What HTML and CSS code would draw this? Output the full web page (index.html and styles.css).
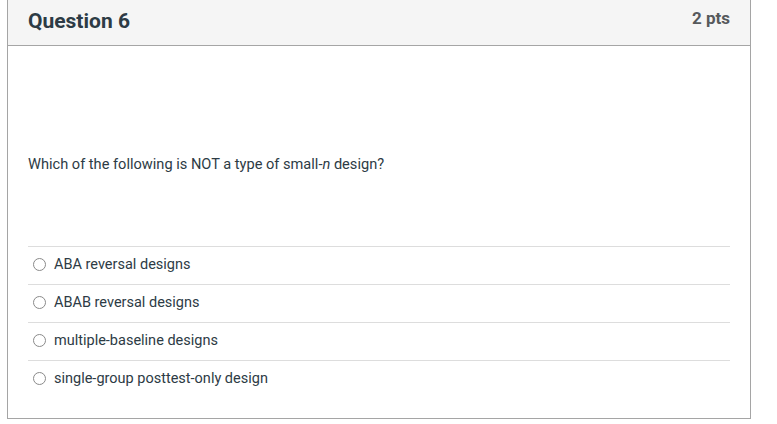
FILE: index.html
```html
<!DOCTYPE html>
<html lang="en">
<head>
    <meta charset="UTF-8">
    <title>Question 6</title>
    <link rel="stylesheet" href="styles.css">
</head>
<body>
<div class="question">
    <div class="question-header">
        <h2 class="question-title">Question 6</h2>
        <span class="question-points">2 pts</span>
    </div>

    <div class="question-body">
        <p class="question-text">Which of the following is NOT a type of small-<em>n</em> design?</p>

        <div class="answers">
            <label class="answer"><span class="radio"></span>ABA reversal designs</label>
            <label class="answer"><span class="radio"></span>ABAB reversal designs</label>
            <label class="answer"><span class="radio"></span>multiple-baseline designs</label>
            <label class="answer"><span class="radio"></span>single-group posttest-only design</label>
        </div>
    </div>
</div>
</body>
</html>
```

FILE: styles.css
```css
body {
    margin: 0;
    padding: 0;
    background-color: #ffffff;
    font-family: Roboto, "Liberation Sans", Arial, sans-serif;
    color: #2d3b45;
}

.question {
    margin: -1px 0 0 7px;
    width: 744px;
    height: 420px;
    box-sizing: border-box;
    border: 1px solid #a5a5a5;
}

/* ヘッダー */
.question-header {
    display: flex;
    justify-content: space-between;
    align-items: flex-start;
    height: 46px;
    box-sizing: border-box;
    padding: 0 20px 0 20px;
    background-color: #f5f5f5;
    border-bottom: 1px solid #a5a5a5;
}

.question-title {
    margin: 8px 0 0 0;
    font-size: 21px;
    line-height: 26px;
    font-weight: bold;
    color: #2d3b45;
}

.question-points {
    margin: 7px 0 0 0;
    font-size: 17px;
    line-height: 22px;
    font-weight: bold;
    color: #56595c;
}

.question-body {
    padding: 0 20px;
}

.question-text {
    margin: 0;
    padding-top: 108px;
    font-size: 14.6px;
    line-height: 20px;
}

.answers {
    margin-top: 72px;
}

.answer {
    display: flex;
    align-items: center;
    height: 35px;
    padding-bottom: 2px;
    border-top: 1px solid #dddddd;
    font-size: 14.5px;
}

.radio {
    width: 11px;
    height: 11px;
    border: 1px solid #8a8a8a;
    border-radius: 50%;
    margin: 0 8px 0 5px;
}
```
